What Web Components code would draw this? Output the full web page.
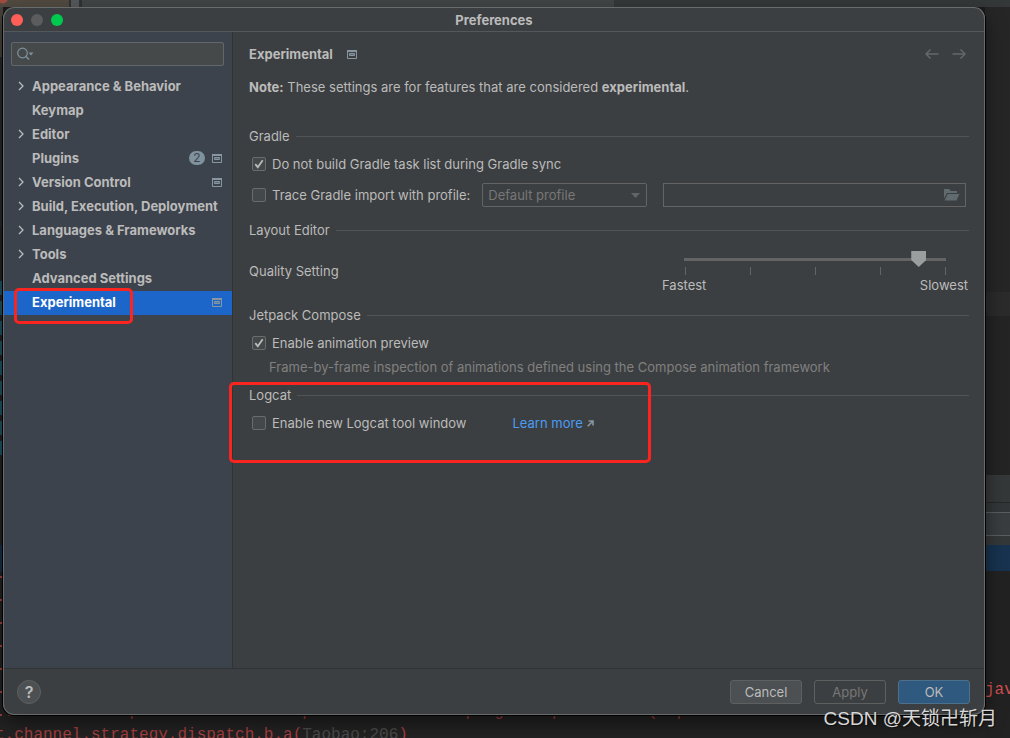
<!DOCTYPE html>
<html lang="en">
<head>
<meta charset="UTF-8">
<meta name="viewport" content="width=device-width, initial-scale=1">
<title>Preferences</title>
<style>
    body {
        margin: 0;
        background: #1e1e1e;
        color: #bbbbbb;
        font: 13px/20px Inter, "Liberation Sans", sans-serif;
    }
</style>
</head>
<body>
<preferences-app></preferences-app>

<script>
const MODIFIED_ICON = `
    <svg width="10" height="9" viewBox="0 0 10 9" fill="none" stroke="currentColor" aria-hidden="true">
        <path d="M.5 .5h9v8h-9z"/><path d="M0 1h10" stroke-width="2"/><path d="M2.5 3.5h5v2h-5z" fill="currentColor" fill-opacity=".5"/>
    </svg>`;

// Editor and log console behind the dialog
class IdeBackdrop extends HTMLElement {
    constructor() {
        super();
        this.attachShadow({ mode: "open" });
        this.shadowRoot.innerHTML = `
            <style>
                :host {
                    position: absolute;
                    inset: 0;
                    overflow: hidden;
                    background: linear-gradient(#1b1b1b, #232323);
                }
                .toolbar {
                    height: 7px;
                    background: radial-gradient(circle at 3px -1px, #a04b3e 4px, transparent 5px), linear-gradient(90deg, #504a40 69px, #303334 69px 71px, #55585a 71px 79px, #303334 79px 82px, #404545 82px 614px, #353839 614px);
                }
                .gutter, .panes {
                    position: absolute;
                    top: 7px;
                    bottom: 0;
                }
                .gutter {
                    left: 0;
                    width: 3px;
                    background:
                        repeating-linear-gradient(#a83f40 0 2px, transparent 2px 23px) 0 569px / 2px 150px no-repeat,
                        linear-gradient(transparent 538px, #15304a 538px 565px, transparent 565px),
                        repeating-linear-gradient(transparent 0 6px, #1f5364 6px 20px) 0 268px / 3px 180px no-repeat,
                        linear-gradient(#47423b 50px, #26292a 50px 220px, #222 220px);
                }
                .panes {
                    right: 0;
                    width: 25px;
                    background: linear-gradient(#262626 285px, #2b2b2b 285px 309px, #242424 309px 468px, #353839 468px 495px, #262829 495px 496px, #333638 496px 505px, #5a5e60 505px 506px, #393d3f 506px 528px, #5a5e60 528px 529px, #353839 529px 538px, #17334f 538px 564px, #222 564px);
                }
                pre {
                    position: absolute;
                    left: -5px;
                    bottom: -9px;
                    margin: 0;
                    color: #a83f40;
                    font: 16px/23px "Liberation Mono", monospace;
                }
                .previous {
                    bottom: 14px;
                }
                .more {
                    right: 0;
                    left: auto;
                    bottom: 36px;
                    width: 25px;
                    color: #d24f50;
                }
                span {
                    color: #4b4b4b;
                }
            </style>
            <div class="toolbar"></div>
            <div class="gutter"></div>
            <div class="panes"></div>
            <pre class="more">java</pre>
            <pre class="previous"> .            p                 p                p  g     p         (  p</pre>
            <pre>t.channel.strategy.dispatch.b.a(<span>Taobao:206</span>)</pre>
        `;
    }
}

class TitleBar extends HTMLElement {
    constructor() {
        super();
        this.attachShadow({ mode: "open" });
        this.shadowRoot.innerHTML = `
            <style>
                :host {
                    display: grid;
                    grid-template-columns: 1fr auto 1fr;
                    align-items: center;
                    height: 23px;
                    padding: 0 7px;
                    border-bottom: 1px solid #55585a;
                    font-weight: 700;
                }
                .lights {
                    display: flex;
                    gap: 8px;
                }
                button {
                    width: 12px;
                    height: 12px;
                    padding: 0;
                    border: 0;
                    border-radius: 50%;
                    background: #5b5c5e;
                }
                .close { background: #ff5f57; }
                .zoom { background: #00ca4e; }
            </style>
            <div class="lights">
                <button class="close" aria-label="Close"></button>
                <button aria-label="Minimize" disabled></button>
                <button class="zoom" aria-label="Zoom"></button>
            </div>
            <slot></slot>
        `;
    }
}

class SearchField extends HTMLElement {
    constructor() {
        super();
        this.attachShadow({ mode: "open" });
        this.shadowRoot.innerHTML = `
            <style>
                :host {
                    display: flex;
                    align-items: center;
                    box-sizing: border-box;
                    height: 24px;
                    margin: 0 8px 0 7px;
                    padding: 0 5px;
                    border: 1px solid #646769;
                    border-radius: 2px;
                    background: #45494a;
                    color: #7f929e;
                }
                input {
                    flex: 1;
                    min-width: 0;
                    border: 0;
                    outline: 0;
                    background: none;
                    color: #bbbbbb;
                    font: inherit;
                }
            </style>
            <svg width="17" height="14" viewBox="0 0 17 14" fill="none" stroke="currentColor" aria-hidden="true">
                <circle cx="5.5" cy="6" r="4.8" stroke-width="1.2"/>
                <path d="M9 9.5l3 3" stroke-width="1.5"/>
                <path d="M11.5 5.5h5l-2.5 3z" fill="currentColor" stroke="none"/>
            </svg>
            <input type="text" aria-label="Search settings">
        `;
    }
}

class SettingsItem extends HTMLElement {
    constructor() {
        super();
        this.attachShadow({ mode: "open" });
    }

    connectedCallback() {
        const count = this.getAttribute("count");
        this.shadowRoot.innerHTML = `
            <style>
                :host {
                    position: relative;
                    display: flex;
                    align-items: center;
                    box-sizing: border-box;
                    height: 24px;
                    padding: 0 10px 2px 12px;
                    font-weight: 700;
                    white-space: nowrap;
                    color: #bbbbbb;
                }
                :host([selected]) {
                    background: #1c65c9;
                    color: #ffffff;
                }
                .arrow {
                    flex: none;
                    width: 16px;
                    height: 10px;
                }
                a {
                    flex: 1;
                    color: inherit;
                    text-decoration: none;
                }
                .count {
                    width: 16px;
                    margin-right: 7px;
                    border-radius: 7px;
                    background: #7f929e;
                    color: #3d434c;
                    font-size: 12px;
                    line-height: 14px;
                    font-weight: 400;
                    text-align: center;
                }
                .modified {
                    display: flex;
                    color: #8796a1;
                }
            </style>
            <svg class="arrow" viewBox="0 0 16 10" fill="none" stroke="#bbbbbb" stroke-width="1.3" aria-hidden="true">
                ${this.hasAttribute("group") ? `<path d="M3 1l4 4-4 4"/>` : ""}
            </svg>
            <a href="#"><slot></slot></a>
            ${count ? `<span class="count">${count}</span>` : ""}
            ${this.hasAttribute("modified") ? `<span class="modified">${MODIFIED_ICON}</span>` : ""}
            <slot name="mark"></slot>
        `;
    }
}

class SettingsSidebar extends HTMLElement {
    constructor() {
        super();
        this.attachShadow({ mode: "open" });
        this.shadowRoot.innerHTML = `
            <style>
                :host {
                    box-sizing: border-box;
                    width: 229px;
                    padding-top: 10px;
                    border-right: 1px solid #323335;
                    background: #3d434c;
                }
                nav {
                    margin-top: 9px;
                }
            </style>
            <search-field></search-field>
            <nav><slot></slot></nav>
        `;
    }
}

class SettingsSection extends HTMLElement {
    constructor() {
        super();
        this.attachShadow({ mode: "open" });
        this.shadowRoot.innerHTML = `
            <style>
                :host {
                    position: relative;
                    display: block;
                }
                h3 {
                    display: flex;
                    align-items: center;
                    gap: 6px;
                    margin: 0 0 8px;
                    font: inherit;
                }
                h3::after {
                    content: "";
                    flex: 1;
                    height: 1px;
                    background: #515354;
                }
            </style>
            <h3>${this.getAttribute("heading")}</h3>
            <slot></slot>
        `;
    }
}

class CheckOption extends HTMLElement {
    constructor() {
        super();
        this.attachShadow({ mode: "open" });
        this.shadowRoot.innerHTML = `
            <style>
                :host {
                    display: flex;
                    padding-left: 3px;
                    white-space: nowrap;
                }
                label {
                    display: flex;
                    align-items: center;
                    gap: 6px;
                }
                input {
                    appearance: none;
                    box-sizing: border-box;
                    width: 14px;
                    height: 14px;
                    margin: 0;
                    border: 1px solid #6b6b6b;
                    border-radius: 2px;
                    background: #43494a;
                }
                .box {
                    position: relative;
                    display: flex;
                }
                svg {
                    position: absolute;
                    inset: 0;
                    display: none;
                    pointer-events: none;
                }
                input:checked + svg {
                    display: block;
                }
            </style>
            <label>
                <span class="box">
                    <input type="checkbox" ${this.hasAttribute("checked") ? "checked" : ""}>
                    <svg width="14" height="14" viewBox="0 0 14 14" fill="none" stroke="#bbbbbb" stroke-width="1.8" aria-hidden="true">
                        <path d="M3.3 7.2l2.5 3L10.7 3.2"/>
                    </svg>
                </span>
                <slot></slot>
            </label>
        `;
    }
}

class ProfileRow extends HTMLElement {
    constructor() {
        super();
        this.attachShadow({ mode: "open" });
        this.shadowRoot.innerHTML = `
            <style>
                :host {
                    display: flex;
                    align-items: center;
                    height: 24px;
                }
                .combo {
                    position: relative;
                    width: 165px;
                    margin: 0 16px 0 12px;
                }
                select, .path {
                    box-sizing: border-box;
                    width: 100%;
                    height: 24px;
                    border: 1px solid #646464;
                    background: none;
                }
                select {
                    appearance: none;
                    display: block;
                    padding: 0 5px;
                    border-radius: 2px;
                    color: #777777;
                    font: inherit;
                    opacity: 1;
                }
                .combo svg {
                    position: absolute;
                    right: 7px;
                    top: 10px;
                }
                .path {
                    display: flex;
                    flex: 1;
                    align-items: center;
                    padding-right: 5px;
                }
                input {
                    flex: 1;
                    min-width: 0;
                    border: 0;
                    background: none;
                }
            </style>
            <check-option>Trace Gradle import with profile:</check-option>
            <div class="combo">
                <select disabled aria-label="Profile"><option>Default profile</option></select>
                <svg width="9" height="5" viewBox="0 0 9 5" fill="#646464" aria-hidden="true"><path d="M0 0h9L4.5 5z"/></svg>
            </div>
            <div class="path">
                <input type="text" disabled aria-label="Profile location">
                <svg width="16" height="12" viewBox="0 0 16 12" fill="#616a6e" aria-hidden="true">
                    <path d="M0 0h5l2 2h6v2H3L0 9.5z"/><path d="M3.7 5H15.5l-3 6.5H.5z"/>
                </svg>
            </div>
        `;
    }
}

class QualitySlider extends HTMLElement {
    constructor() {
        super();
        this.attachShadow({ mode: "open" });
        this.shadowRoot.innerHTML = `
            <style>
                :host {
                    display: flex;
                    justify-content: space-between;
                    align-items: flex-start;
                }
                label {
                    margin-top: 10px;
                }
                .scale {
                    width: 306px;
                    margin-right: 1px;
                }
                input {
                    appearance: none;
                    display: block;
                    width: 262px;
                    height: 16px;
                    margin: 0 22px;
                    background: linear-gradient(#646464, #646464) center / 100% 3px no-repeat;
                }
                input::-webkit-slider-thumb {
                    appearance: none;
                    width: 15px;
                    height: 16px;
                    background: #9b9e9f;
                    clip-path: polygon(0 0, 100% 0, 100% 56%, 50% 100%, 0 56%);
                }
                .ticks {
                    display: flex;
                    justify-content: space-between;
                    height: 8px;
                    margin: 0 22px 0 23px;
                }
                .ticks i {
                    width: 1px;
                    background: #646464;
                }
                .ends {
                    display: flex;
                    justify-content: space-between;
                }
            </style>
            <label for="quality">Quality Setting</label>
            <div class="scale">
                <input id="quality" type="range" min="0" max="100" value="92">
                <div class="ticks"><i></i><i></i><i></i><i></i><i></i></div>
                <div class="ends"><span>Fastest</span><span>Slowest</span></div>
            </div>
        `;
    }
}

// Red rectangle drawn over an area, box set through --mark-* properties
class HighlightMark extends HTMLElement {
    constructor() {
        super();
        this.attachShadow({ mode: "open" });
        this.shadowRoot.innerHTML = `
            <style>
                :host {
                    position: absolute;
                    z-index: 1;
                    left: var(--mark-left);
                    top: -3px;
                    box-sizing: border-box;
                    width: var(--mark-width);
                    height: var(--mark-height);
                    border: 3px solid #fb251f;
                    border-radius: 5px;
                    pointer-events: none;
                }
            </style>
        `;
    }
}

class SettingsPage extends HTMLElement {
    constructor() {
        super();
        this.attachShadow({ mode: "open" });
        this.shadowRoot.innerHTML = `
            <style>
                :host {
                    display: block;
                    padding: 12px 15px 0 16px;
                }
                header {
                    display: flex;
                    align-items: center;
                    gap: 14px;
                    height: 20px;
                }
                h2 {
                    margin: 0;
                    font: inherit;
                    font-weight: 700;
                }
                header svg {
                    display: block;
                }
                .changed {
                    color: #8796a1;
                }
                .history {
                    display: flex;
                    gap: 13px;
                    margin: 0 3px 0 auto;
                }
                .history button {
                    padding: 0;
                    border: 0;
                    background: none;
                    color: #646768;
                }
                p {
                    margin: 0;
                }
                b {
                    font-weight: 700;
                }
                .note {
                    margin: 13px 0 29px;
                }
                profile-row {
                    margin: 9px 3px 13px 0;
                }
                quality-slider {
                    margin: 11px 0 10px;
                }
                .comment {
                    margin: 4px 0 8px 20px;
                    color: #808080;
                }
                .logcat {
                    display: flex;
                    gap: 46px;
                }
                a {
                    display: flex;
                    align-items: center;
                    gap: 4px;
                    color: #4a9cf5;
                    text-decoration: none;
                }
                highlight-mark {
                    --mark-left: -20px;
                    --mark-width: 422px;
                    --mark-height: 81px;
                }
            </style>
            <header>
                <h2>Experimental</h2>
                <span class="changed">${MODIFIED_ICON}</span>
                <div class="history">
                    <button aria-label="Back" disabled><svg width="14" height="10" viewBox="0 0 14 10" fill="none" stroke="currentColor" stroke-width="1.5"><path d="M5.5 .5L1 5l4.5 4.5M1 5h12.5"/></svg></button>
                    <button aria-label="Forward" disabled><svg width="14" height="10" viewBox="0 0 14 10" fill="none" stroke="currentColor" stroke-width="1.5"><path d="M8.5 .5L13 5 8.5 9.5M13 5H.5"/></svg></button>
                </div>
            </header>
            <p class="note"><b>Note:</b> These settings are for features that are considered <b>experimental</b>.</p>
            <settings-section heading="Gradle">
                <check-option checked>Do not build Gradle task list during Gradle sync</check-option>
                <profile-row></profile-row>
            </settings-section>
            <settings-section heading="Layout Editor">
                <quality-slider></quality-slider>
            </settings-section>
            <settings-section heading="Jetpack Compose">
                <check-option checked>Enable animation preview</check-option>
                <p class="comment">Frame-by-frame inspection of animations defined using the Compose animation framework</p>
            </settings-section>
            <settings-section heading="Logcat">
                <div class="logcat">
                    <check-option>Enable new Logcat tool window</check-option>
                    <a href="#">Learn more
                        <svg width="7" height="7" viewBox="0 0 7 7" fill="none" stroke="#8796a1" stroke-width="1.6" aria-hidden="true"><path d="M1.5 1H6v4.5M6 1L.7 6.3"/></svg>
                    </a>
                </div>
                <highlight-mark></highlight-mark>
            </settings-section>
        `;
    }
}

class DialogButton extends HTMLElement {
    constructor() {
        super();
        this.attachShadow({ mode: "open" });
        this.shadowRoot.innerHTML = `
            <style>
                :host {
                    display: block;
                }
                button {
                    display: block;
                    width: 72px;
                    height: 24px;
                    padding: 0;
                    border: 1px solid #5e6060;
                    border-radius: 3px;
                    background: #4c5052;
                    color: #bbbbbb;
                    font: inherit;
                }
                button:disabled {
                    background: none;
                    color: #777777;
                }
                :host([primary]) button {
                    border-color: #4c708c;
                    background: #30597f;
                }
                :host([round]) button {
                    width: 24px;
                    border-radius: 50%;
                    font-size: 16px;
                    font-weight: 600;
                }
            </style>
            <button ${this.hasAttribute("disabled") ? "disabled" : ""}><slot></slot></button>
        `;
    }
}

class PreferencesApp extends HTMLElement {
    constructor() {
        super();
        this.attachShadow({ mode: "open" });
        this.shadowRoot.innerHTML = `
            <style>
                :host {
                    position: relative;
                    display: flex;
                    box-sizing: border-box;
                    min-height: 100vh;
                    padding: 8px 25px 23px 3px;
                }
                .window {
                    position: relative;
                    flex: 1;
                    display: grid;
                    grid-template-rows: auto 1fr auto;
                    min-width: 0;
                    border: 1px solid #696c6d;
                    border-top: 0;
                    border-radius: 11px;
                    background: #3c3f41;
                    box-shadow: 0 -1px 0 #696c6d, 0 0 0 1px #000000, 0 8px 20px #00000080;
                }
                .body {
                    display: grid;
                    grid-template-columns: auto 1fr;
                }
                footer {
                    display: flex;
                    gap: 12px;
                    padding: 11px 14px 10px 13px;
                    border-top: 1px solid #323335;
                }
                .help {
                    margin-right: auto;
                }
                highlight-mark {
                    --mark-left: 10px;
                    --mark-width: 119px;
                    --mark-height: 36px;
                }
                .watermark {
                    position: absolute;
                    right: 13px;
                    bottom: 6px;
                    color: #d8d8d8;
                    font: 19px/26px "Liberation Sans", "Noto Sans CJK SC", sans-serif;
                    text-shadow: 1px 1px 1px #00000080;
                }
            </style>
            <ide-backdrop></ide-backdrop>
            <div class="window" role="dialog" aria-label="Preferences">
                <title-bar>Preferences</title-bar>
                <div class="body">
                    <settings-sidebar>
                        <settings-item group>Appearance &amp; Behavior</settings-item>
                        <settings-item>Keymap</settings-item>
                        <settings-item group>Editor</settings-item>
                        <settings-item count="2" modified>Plugins</settings-item>
                        <settings-item group modified>Version Control</settings-item>
                        <settings-item group>Build, Execution, Deployment</settings-item>
                        <settings-item group>Languages &amp; Frameworks</settings-item>
                        <settings-item group>Tools</settings-item>
                        <settings-item>Advanced Settings</settings-item>
                        <settings-item selected modified>Experimental<highlight-mark slot="mark"></highlight-mark></settings-item>
                    </settings-sidebar>
                    <settings-page></settings-page>
                </div>
                <footer>
                    <dialog-button class="help" round>?</dialog-button>
                    <dialog-button>Cancel</dialog-button>
                    <dialog-button disabled>Apply</dialog-button>
                    <dialog-button primary>OK</dialog-button>
                </footer>
            </div>
            <div class="watermark">CSDN @天锁卍斩月</div>
        `;
    }
}

customElements.define("ide-backdrop", IdeBackdrop);
customElements.define("title-bar", TitleBar);
customElements.define("search-field", SearchField);
customElements.define("settings-item", SettingsItem);
customElements.define("settings-sidebar", SettingsSidebar);
customElements.define("settings-section", SettingsSection);
customElements.define("check-option", CheckOption);
customElements.define("profile-row", ProfileRow);
customElements.define("quality-slider", QualitySlider);
customElements.define("highlight-mark", HighlightMark);
customElements.define("settings-page", SettingsPage);
customElements.define("dialog-button", DialogButton);
customElements.define("preferences-app", PreferencesApp);
</script>
</body>
</html>
